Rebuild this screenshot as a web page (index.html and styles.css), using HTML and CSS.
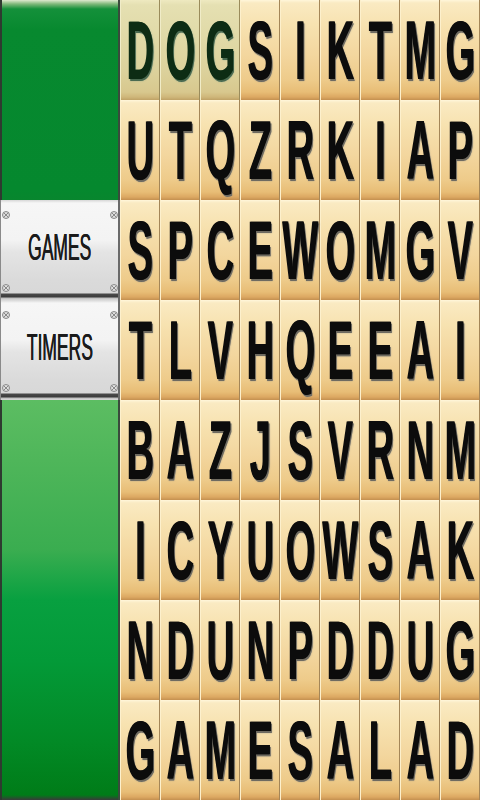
FILE: index.html
```html
<!DOCTYPE html>
<html>
<head>
<meta charset="utf-8">
<link rel="stylesheet" href="styles.css">
</head>
<body>
<div class="app">
  <div class="side">
    <div class="green-top"></div>
    <div class="btn">
      <span class="screw tl"></span><span class="screw tr"></span><span class="screw bl"></span><span class="screw br"></span>
      <span class="btn-label">GAMES</span>
    </div>
    <div class="btn">
      <span class="screw tl"></span><span class="screw tr"></span><span class="screw bl"></span><span class="screw br"></span>
      <span class="btn-label">TIMERS</span>
    </div>
    <div class="green-bottom"></div>
  </div>
  <div class="board">
    <div class="tile hl"><span>D</span></div><div class="tile hl"><span>O</span></div><div class="tile hl"><span>G</span></div><div class="tile"><span>S</span></div><div class="tile"><span>I</span></div><div class="tile"><span>K</span></div><div class="tile"><span>T</span></div><div class="tile"><span>M</span></div><div class="tile"><span>G</span></div>
    <div class="tile"><span>U</span></div><div class="tile"><span>T</span></div><div class="tile"><span>Q</span></div><div class="tile"><span>Z</span></div><div class="tile"><span>R</span></div><div class="tile"><span>K</span></div><div class="tile"><span>I</span></div><div class="tile"><span>A</span></div><div class="tile"><span>P</span></div>
    <div class="tile"><span>S</span></div><div class="tile"><span>P</span></div><div class="tile"><span>C</span></div><div class="tile"><span>E</span></div><div class="tile"><span>W</span></div><div class="tile"><span>O</span></div><div class="tile"><span>M</span></div><div class="tile"><span>G</span></div><div class="tile"><span>V</span></div>
    <div class="tile"><span>T</span></div><div class="tile"><span>L</span></div><div class="tile"><span>V</span></div><div class="tile"><span>H</span></div><div class="tile"><span>Q</span></div><div class="tile"><span>E</span></div><div class="tile"><span>E</span></div><div class="tile"><span>A</span></div><div class="tile"><span>I</span></div>
    <div class="tile"><span>B</span></div><div class="tile"><span>A</span></div><div class="tile"><span>Z</span></div><div class="tile"><span>J</span></div><div class="tile"><span>S</span></div><div class="tile"><span>V</span></div><div class="tile"><span>R</span></div><div class="tile"><span>N</span></div><div class="tile"><span>M</span></div>
    <div class="tile"><span>I</span></div><div class="tile"><span>C</span></div><div class="tile"><span>Y</span></div><div class="tile"><span>U</span></div><div class="tile"><span>O</span></div><div class="tile"><span>W</span></div><div class="tile"><span>S</span></div><div class="tile"><span>A</span></div><div class="tile"><span>K</span></div>
    <div class="tile"><span>N</span></div><div class="tile"><span>D</span></div><div class="tile"><span>U</span></div><div class="tile"><span>N</span></div><div class="tile"><span>P</span></div><div class="tile"><span>D</span></div><div class="tile"><span>D</span></div><div class="tile"><span>U</span></div><div class="tile"><span>G</span></div>
    <div class="tile"><span>G</span></div><div class="tile"><span>A</span></div><div class="tile"><span>M</span></div><div class="tile"><span>E</span></div><div class="tile"><span>S</span></div><div class="tile"><span>A</span></div><div class="tile"><span>L</span></div><div class="tile"><span>A</span></div><div class="tile"><span>D</span></div>
  </div>
</div>
</body>
</html>
```
FILE: styles.css
```css
html, body {
  margin: 0;
  padding: 0;
  width: 480px;
  height: 800px;
  overflow: hidden;
  background: #000;
}
.app {
  display: flex;
  width: 480px;
  height: 800px;
}
.side {
  width: 120px;
  display: flex;
  flex-direction: column;
}
.green-top {
  height: 200px;
  background: linear-gradient(to bottom, #dfe9cf 0px, #7fb87a 4px, #14903a 9px, #07892f 30px, #05882e 190px, #08862e 200px);
  box-shadow: inset 2px 0 0 #2e3a30, inset -2px 0 0 #3a4a3c;
}
.green-bottom {
  height: 400px;
  background: linear-gradient(to bottom, #5cbd62 0px, #4fb65a 60px, #3aad50 150px, #08a040 200px, #039a38 260px, #028a26 340px, #007c18 395px, #3a3a3a 400px);
  box-shadow: inset 2px 0 0 #2e3a30, inset -2px 0 0 #3a4a3c;
}
.btn {
  position: relative;
  height: 100px;
  box-sizing: border-box;
  display: flex;
  align-items: center;
  justify-content: center;
  background: linear-gradient(to bottom, #d6d6d6 0px, #f6f6f6 3px, #f3f3f3 40px, #e4e4e4 52px, #dadada 80px, #d8d8d8 93px, #4a4a4a 94px, #3c3c3c 97px, #bdbdbd 98px, #dcdcdc 100px);
  box-shadow: inset 1px 0 0 #8a8a8a, inset -2px 0 0 #6a6a6a;
}
.btn-label {
  display: inline-block;
  font-family: "Liberation Sans", Arial, sans-serif;
  font-size: 38px;
  color: #1a1a1a;
  transform: scale(0.46, 0.95);
  text-shadow: 0.6px 0 0 #333, 0 0 1px #666;
  margin-top: -4px;
  white-space: nowrap;
}
.screw {
  position: absolute;
  width: 6px;
  height: 6px;
  border: 1px solid #8a8a8a;
  border-radius: 50%;
  background:
    linear-gradient(45deg, transparent 42%, #888 42%, #888 58%, transparent 58%),
    linear-gradient(-45deg, transparent 42%, #888 42%, #888 58%, transparent 58%),
    #dedede;
}
.screw.tl { left: 2px; top: 11px; }
.screw.tr { right: 2px; top: 11px; }
.screw.bl { left: 2px; top: 84px; }
.screw.br { right: 2px; top: 84px; }
.board {
  width: 360px;
  height: 800px;
  display: grid;
  grid-template-columns: repeat(9, 40px);
  grid-template-rows: repeat(8, 100px);
}
.tile {
  display: flex;
  align-items: center;
  justify-content: center;
  background: linear-gradient(to bottom, #fff6da 0px, #faeac2 3px, #f7e2b0 25px, #f3d69e 55px, #eecb8a 80px, #e8bd76 92px, #dca862 97px, #c49050 100px);
  box-shadow: inset 1px 0 0 #fdf0cc, inset -1px 0 0 #a48658;
}
.tile.hl {
  background: linear-gradient(to bottom, #eee9c0 0px, #e5e0b2 5px, #e0d9a6 40px, #dcd29c 70px, #d8c88e 92px, #cfb77a 97px, #bfa266 100px);
  box-shadow: inset 1px 0 0 #f0ecc8, inset -1px 0 0 #9a8c5c;
}
.tile span {
  display: inline-block;
  font-family: "Liberation Sans", Arial, sans-serif;
  font-weight: bold;
  font-size: 38px;
  line-height: 1;
  color: #0c0c0c;
  transform: scaleY(2.2);
  text-shadow: 0.7px 0 0 #0c0c0c, 1.5px 1px 0 #6e6a60, 1.5px 1px 1px #9a9588;
}
.tile.hl span {
  color: #0d2c14;
  text-shadow: 0.7px 0 0 #0d2c14, 1.5px 1px 0 #4a6a50, 1.5px 1px 1px #8aa088;
}
```
